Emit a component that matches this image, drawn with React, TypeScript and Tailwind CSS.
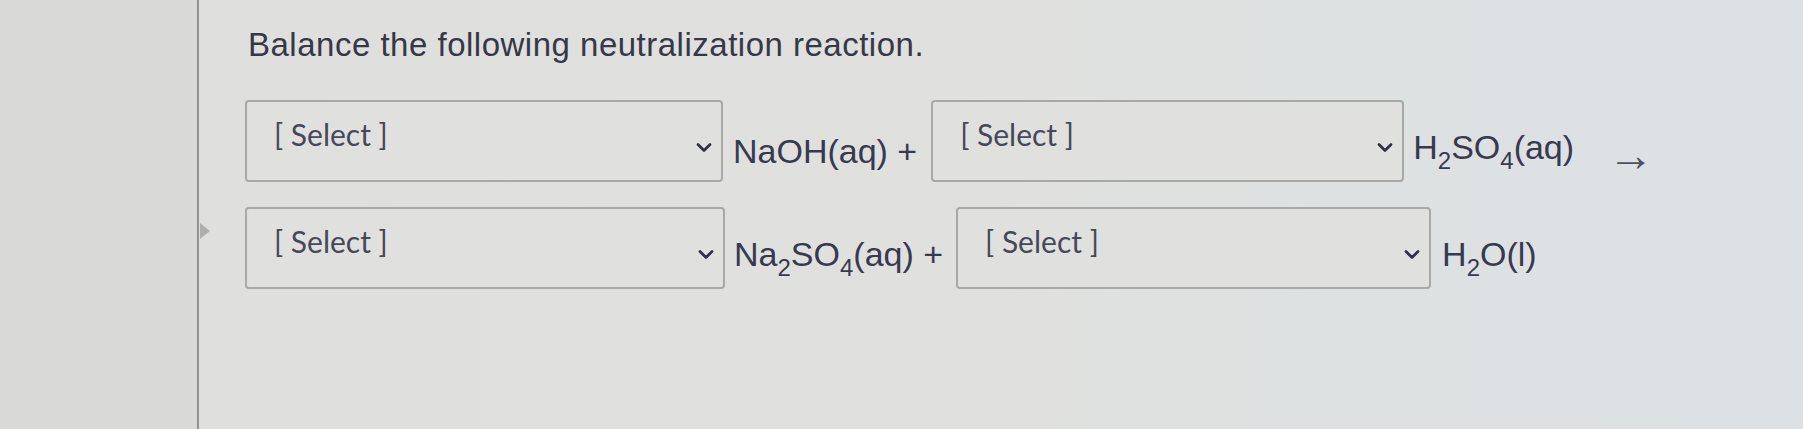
import React from "react";

const chem = "font-['Liberation_Sans',Arial,sans-serif] text-[34px] leading-[34px] text-[#373a4e]";
const sub = "relative top-[10px] text-[24px]";

function Chevron() {
  return (
    <svg width="16" height="11" viewBox="0 0 16 11" className="self-center -mt-[4px] shrink-0">
      <polyline points="2,2.5 8,8.5 14,2.5" fill="none" stroke="#30324a" strokeWidth="2.8" strokeLinecap="round" strokeLinejoin="round" />
    </svg>
  );
}

function SelectBox({ width }: { width: string }) {
  return (
    <div
      className={`flex h-[82px] shrink-0 items-start justify-between rounded-[4px] border-2 border-[#a8a9a7] bg-[#e0e1de] pl-[27px] pr-[9px] pt-[17px] ${width}`}
    >
      <span className="font-['Lato','Open_Sans',sans-serif] text-[30px] leading-none text-[#464859]">[ Select ]</span>
      <Chevron />
    </div>
  );
}

export default function App() {
  return (
    <div className="relative flex h-[429px] w-full overflow-hidden bg-[#dfe0dd]">
      <div className="w-[199px] shrink-0 border-r-2 border-[#939491] bg-[#d9dad7]" />
      <div className="absolute left-[200px] top-[223px] h-0 w-0 border-y-[8px] border-l-[10px] border-y-transparent border-l-[#aeafac]" />

      <div className="flex-1 bg-gradient-to-r from-[#dfe0dd] via-[#e0e1df] to-[#dbe1e5] pl-[46px] pt-[28px]">
        <h1 className="pl-[3px] font-['Liberation_Sans',Arial,sans-serif] text-[33px] leading-[33px] tracking-[0.5px] text-[#363847]">
          Balance the following neutralization reaction.
        </h1>

        <div className="mt-[39px] flex items-end">
          <SelectBox width="w-[478px]" />
          <span className={`${chem} ml-[10px] mr-[14px] pb-[14px] whitespace-nowrap`}>NaOH(aq) +</span>
          <SelectBox width="w-[473px]" />
          <span className={`${chem} ml-[9px] pb-[14px] whitespace-nowrap`}>
            H<span className={sub}>2</span>SO<span className={sub}>4</span>(aq)
          </span>
          <span className="relative top-[4px] ml-[34px] pb-[14px] font-['Liberation_Sans',Arial,sans-serif] text-[46px] leading-[34px] text-[#4d4f63]">
            →
          </span>
        </div>

        <div className="mt-[25px] flex items-end">
          <SelectBox width="w-[480px]" />
          <span className={`${chem} ml-[9px] mr-[13px] pb-[14px] whitespace-nowrap`}>
            Na<span className={sub}>2</span>SO<span className={sub}>4</span>(aq) +
          </span>
          <SelectBox width="w-[475px]" />
          <span className={`${chem} ml-[11px] pb-[14px] whitespace-nowrap`}>
            H<span className={sub}>2</span>O(l)
          </span>
        </div>
      </div>
    </div>
  );
}
